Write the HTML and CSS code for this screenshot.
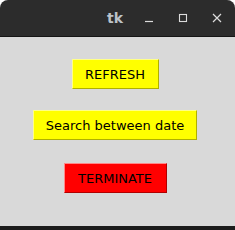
FILE: index.html
```html
<!DOCTYPE html>
<html>
<head>
    <title>tk</title>
    <link rel="stylesheet" href="styles.css">
</head>
<body>
    <div class="window">
        <div class="titlebar">
            <span class="title">tk</span>
            <div class="controls">
                <span class="ctrl">
                    <svg width="10" height="10" viewBox="0 0 10 10"><line x1="1" y1="8.5" x2="9" y2="8.5" stroke="#dcdcdc" stroke-width="1.2"/></svg>
                </span>
                <span class="ctrl">
                    <svg width="10" height="10" viewBox="0 0 10 10"><rect x="1.5" y="1.5" width="7" height="7" fill="none" stroke="#dcdcdc" stroke-width="1.1"/></svg>
                </span>
                <span class="ctrl">
                    <svg width="10" height="10" viewBox="0 0 10 10"><path d="M1 1 L9 9 M9 1 L1 9" stroke="#dcdcdc" stroke-width="1.2"/></svg>
                </span>
            </div>
        </div>
        <div class="content">
            <button class="btn btn-yellow btn-refresh">REFRESH</button>
            <button class="btn btn-yellow btn-search">Search between date</button>
            <button class="btn btn-red btn-terminate">TERMINATE</button>
        </div>
        <div class="bottom"></div>
    </div>
</body>
</html>
```

FILE: styles.css
```css
html, body {
    margin: 0;
    padding: 0;
    background: #ffffff;
}
body {
    font-family: "DejaVu Sans", sans-serif;
    width: 235px;
    height: 230px;
    overflow: hidden;
}
.window {
    display: flex;
    flex-direction: column;
    height: 230px;
}
.titlebar {
    height: 36px;
    background: #2c2c2c;
    border-bottom: 1px solid #151515;
    border-radius: 8px 8px 0 0;
    display: flex;
    align-items: center;
    padding-left: 107px;
    padding-right: 8px;
}
.title {
    color: #bcc3c9;
    font-weight: bold;
    font-size: 14px;
}
.controls {
    margin-left: auto;
    display: flex;
    gap: 14px;
}
.ctrl {
    width: 20px;
    height: 20px;
    display: flex;
    align-items: center;
    justify-content: center;
}
.ctrl svg {
    display: block;
}
.content {
    flex: 1;
    background: #d9d9d9;
    display: flex;
    flex-direction: column;
    align-items: center;
    padding-right: 5px;
}
.btn {
    font-family: "DejaVu Sans", sans-serif;
    font-size: 13px;
    color: #000;
    height: 30px;
    padding: 0;
    white-space: nowrap;
    border-width: 1px;
    border-style: solid;
    display: flex;
    align-items: center;
    justify-content: center;
}
.btn-yellow {
    background: #ffff00;
    border-color: #ffff88 #b0b000 #b0b000 #ffff88;
}
.btn-red {
    background: #ff0000;
    border-color: #ff8888 #b00000 #b00000 #ff8888;
}
.btn-refresh {
    margin-top: 22px;
    width: 87px;
}
.btn-search {
    margin-top: 21px;
    width: 164px;
}
.btn-terminate {
    margin-top: 23px;
    width: 103px;
}
.bottom {
    height: 4px;
    background: #1c1c1c;
}
```
